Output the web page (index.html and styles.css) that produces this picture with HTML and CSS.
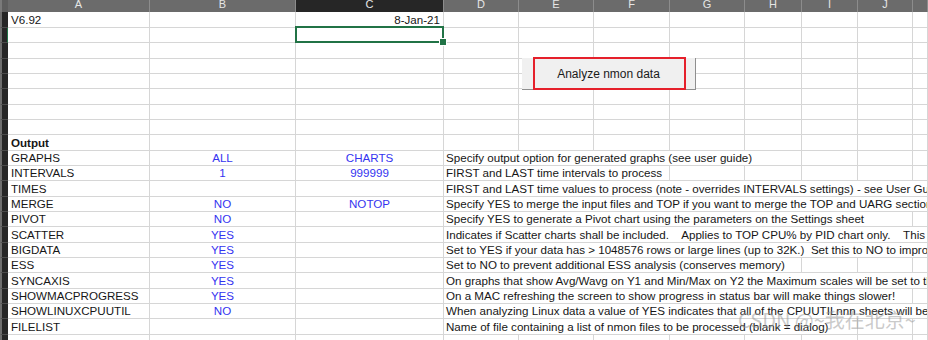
FILE: index.html
```html
<!DOCTYPE html>
<html lang="en">

<head>
    <meta charset="UTF-8">
    <title>nmon analyser</title>
    <link rel="stylesheet" href="styles.css">
</head>

<body>
    <div class="sheet">
        <!-- column headers -->
        <div class="corner"></div>
        <div class="hd">A</div>
        <div class="hd">B</div>
        <div class="hd hd-sel">C</div>
        <div class="hd">D</div>
        <div class="hd">E</div>
        <div class="hd">F</div>
        <div class="hd">G</div>
        <div class="hd">H</div>
        <div class="hd">I</div>
        <div class="hd">J</div>
        <div class="hd"></div>

        <!-- row 1 -->
        <div class="rh"></div>
        <div class="cell">V6.92</div>
        <div class="cell"></div>
        <div class="cell right">8-Jan-21</div>
        <div class="cell"></div><div class="cell"></div><div class="cell"></div><div class="cell"></div>
        <div class="cell"></div><div class="cell"></div><div class="cell"></div><div class="cell"></div>

        <!-- row 2 -->
        <div class="rh rh-sel"></div>
        <div class="cell"></div>
        <div class="cell"></div>
        <div class="cell active"></div>
        <div class="cell"></div><div class="cell"></div><div class="cell"></div><div class="cell"></div>
        <div class="cell"></div><div class="cell"></div><div class="cell"></div><div class="cell"></div>

        <!-- rows 3 - 8 -->
        <div class="rh"></div>
        <div class="cell"></div><div class="cell"></div><div class="cell"></div><div class="cell"></div>
        <div class="cell"></div><div class="cell"></div><div class="cell"></div><div class="cell"></div>
        <div class="cell"></div><div class="cell"></div><div class="cell"></div>
        <div class="rh"></div>
        <div class="cell"></div><div class="cell"></div><div class="cell"></div><div class="cell"></div>
        <div class="cell"></div><div class="cell"></div><div class="cell"></div><div class="cell"></div>
        <div class="cell"></div><div class="cell"></div><div class="cell"></div>
        <div class="rh"></div>
        <div class="cell"></div><div class="cell"></div><div class="cell"></div><div class="cell"></div>
        <div class="cell"></div><div class="cell"></div><div class="cell"></div><div class="cell"></div>
        <div class="cell"></div><div class="cell"></div><div class="cell"></div>
        <div class="rh"></div>
        <div class="cell"></div><div class="cell"></div><div class="cell"></div><div class="cell"></div>
        <div class="cell"></div><div class="cell"></div><div class="cell"></div><div class="cell"></div>
        <div class="cell"></div><div class="cell"></div><div class="cell"></div>
        <div class="rh"></div>
        <div class="cell"></div><div class="cell"></div><div class="cell"></div><div class="cell"></div>
        <div class="cell"></div><div class="cell"></div><div class="cell"></div><div class="cell"></div>
        <div class="cell"></div><div class="cell"></div><div class="cell"></div>
        <div class="rh"></div>
        <div class="cell"></div><div class="cell"></div><div class="cell"></div><div class="cell"></div>
        <div class="cell"></div><div class="cell"></div><div class="cell"></div><div class="cell"></div>
        <div class="cell"></div><div class="cell"></div><div class="cell"></div>

        <!-- row 9 -->
        <div class="rh"></div>
        <div class="cell bold">Output</div>
        <div class="cell"></div><div class="cell"></div><div class="cell"></div><div class="cell"></div>
        <div class="cell"></div><div class="cell"></div><div class="cell"></div><div class="cell"></div>
        <div class="cell"></div><div class="cell"></div>

        <!-- settings -->
        <div class="rh"></div>
        <div class="cell">GRAPHS</div>
        <div class="cell mid blue">ALL</div>
        <div class="cell mid blue">CHARTS</div>
        <div class="cell desc span5">Specify output option for generated graphs (see user guide)</div>
        <div class="cell"></div><div class="cell"></div><div class="cell"></div>

        <div class="rh"></div>
        <div class="cell">INTERVALS</div>
        <div class="cell mid blue">1</div>
        <div class="cell mid blue">999999</div>
        <div class="cell desc span3">FIRST and LAST time intervals to process</div>
        <div class="cell"></div><div class="cell"></div><div class="cell"></div><div class="cell"></div><div class="cell"></div>

        <div class="rh"></div>
        <div class="cell">TIMES</div>
        <div class="cell"></div>
        <div class="cell"></div>
        <div class="cell desc span8">FIRST and LAST time values to process (note - overrides INTERVALS settings) - see User Guide</div>

        <div class="rh"></div>
        <div class="cell">MERGE</div>
        <div class="cell mid blue">NO</div>
        <div class="cell mid blue">NOTOP</div>
        <div class="cell desc span8">Specify YES to merge the input files and TOP if you want to merge the TOP and UARG sections</div>

        <div class="rh"></div>
        <div class="cell">PIVOT</div>
        <div class="cell mid blue">NO</div>
        <div class="cell"></div>
        <div class="cell desc span7">Specify YES to generate a Pivot chart using the parameters on the Settings sheet</div>
        <div class="cell"></div>

        <div class="rh"></div>
        <div class="cell">SCATTER</div>
        <div class="cell mid blue">YES</div>
        <div class="cell"></div>
        <div class="cell desc span8">Indicates if Scatter charts shall be included.    Applies to TOP CPU% by PID chart only.    This chart can be slow</div>

        <div class="rh"></div>
        <div class="cell">BIGDATA</div>
        <div class="cell mid blue">YES</div>
        <div class="cell"></div>
        <div class="cell desc span8">Set to YES if your data has &gt; 1048576 rows or large lines (up to 32K.)  Set this to NO to improve performance</div>

        <div class="rh"></div>
        <div class="cell">ESS</div>
        <div class="cell mid blue">YES</div>
        <div class="cell"></div>
        <div class="cell desc span5">Set to NO to prevent additional ESS analysis (conserves memory)</div>
        <div class="cell"></div><div class="cell"></div><div class="cell"></div>

        <div class="rh"></div>
        <div class="cell">SYNCAXIS</div>
        <div class="cell mid blue">YES</div>
        <div class="cell"></div>
        <div class="cell desc span8">On graphs that show Avg/Wavg on Y1 and Min/Max on Y2 the Maximum scales will be set to the same value</div>

        <div class="rh"></div>
        <div class="cell">SHOWMACPROGRESS</div>
        <div class="cell mid blue">YES</div>
        <div class="cell"></div>
        <div class="cell desc span7">On a MAC refreshing the screen to show progress in status bar will make things slower!</div>
        <div class="cell"></div>

        <div class="rh"></div>
        <div class="cell">SHOWLINUXCPUUTIL</div>
        <div class="cell mid blue">NO</div>
        <div class="cell"></div>
        <div class="cell desc span8">When analyzing Linux data a value of YES indicates that all of the CPUUTILnnn sheets will be kept</div>

        <div class="rh"></div>
        <div class="cell">FILELIST</div>
        <div class="cell"></div>
        <div class="cell"></div>
        <div class="cell desc span6">Name of file containing a list of nmon files to be processed (blank = dialog)</div>
        <div class="cell"></div><div class="cell"></div>

        <!-- row 22 -->
        <div class="rh"></div>
        <div class="cell"></div><div class="cell"></div><div class="cell"></div><div class="cell"></div>
        <div class="cell"></div><div class="cell"></div><div class="cell"></div><div class="cell"></div>
        <div class="cell"></div><div class="cell"></div><div class="cell"></div>

        <!-- form button sitting on the sheet -->
        <div class="btn">Analyze nmon data</div>
        <div class="btn-mark"></div>

        <div class="watermark">CSDN @~我在北京~</div>
    </div>
</body>

</html>
```

FILE: styles.css
```css
* {
    margin: 0;
    padding: 0;
    box-sizing: border-box;
}

body {
    width: 928px;
    height: 340px;
    overflow: hidden;
    background: #fff;
    font-family: "Liberation Sans", Arial, sans-serif;
    font-size: 11.6px;
    color: #161616;
}

.sheet {
    position: relative;
    display: grid;
    grid-template-columns: 8px 142px 146px 148px 75px 75px 76px 75px 57px 56px 55px 1fr;
    grid-template-rows: 12px 16px 15px repeat(7, 16px 15px 15px);
    width: 928px;
    height: 340px;
    overflow: hidden;
}

/* headers */
.corner {
    background: #5e5e5e;
    border-left: 2px solid #7a7a7a;
}

.hd {
    display: flex;
    justify-content: center;
    align-items: flex-start;
    background: #6b6b6b;
    color: #e6e6e6;
    border-right: 1px solid #8c8c8c;
    line-height: 8px;
    font-size: 11px;
    overflow: hidden;
}

.hd-sel {
    background: #262626;
}

.rh {
    background: #262626;
    border-left: 2px solid #6e6e6e;
    border-bottom: 1px solid #4a4a4a;
}

.rh-sel {
    border-right: 1px solid #217346;
}

/* cells */
.cell {
    display: flex;
    align-items: flex-end;
    padding: 0 3px;
    border-right: 1px solid #d6d6d6;
    border-bottom: 1px solid #d6d6d6;
    white-space: pre;
    overflow: hidden;
    line-height: 14px;
}

.right {
    justify-content: flex-end;
}

.mid {
    justify-content: center;
}

.blue {
    color: #3434f0;
}

.bold {
    font-weight: bold;
}

.desc {
    padding-left: 2px;
    overflow: hidden;
}

.span3 { grid-column: span 3; }
.span5 { grid-column: span 5; }
.span6 { grid-column: span 6; }
.span7 { grid-column: span 7; }
.span8 { grid-column: span 8; }

.active {
    position: relative;
    overflow: visible;
}

.active::after {
    content: "";
    position: absolute;
    top: -2px;
    left: -1px;
    right: -1px;
    bottom: -1px;
    border: 2px solid #217346;
}

.active::before {
    content: "";
    position: absolute;
    right: -4px;
    bottom: -4px;
    width: 6px;
    height: 6px;
    background: #217346;
    border: 1px solid #fff;
    z-index: 2;
}

/* button */
.btn {
    position: absolute;
    left: 522px;
    top: 58px;
    width: 174px;
    height: 32px;
    display: flex;
    align-items: center;
    justify-content: center;
    background: #f0f0f0;
    border-right: 1px solid #8f8f8f;
    border-bottom: 1px solid #8f8f8f;
    font-size: 12px;
    color: #1a1a1a;
}

.btn-mark {
    position: absolute;
    left: 533px;
    top: 57px;
    width: 153px;
    height: 33px;
    border: 2px solid #e5202b;
}

.watermark {
    position: absolute;
    left: 738px;
    top: 308px;
    font-family: "Noto Sans CJK SC", "Liberation Sans", sans-serif;
    font-size: 20px;
    line-height: 24px;
    color: rgba(150, 150, 150, 0.5);
    white-space: nowrap;
}
```
